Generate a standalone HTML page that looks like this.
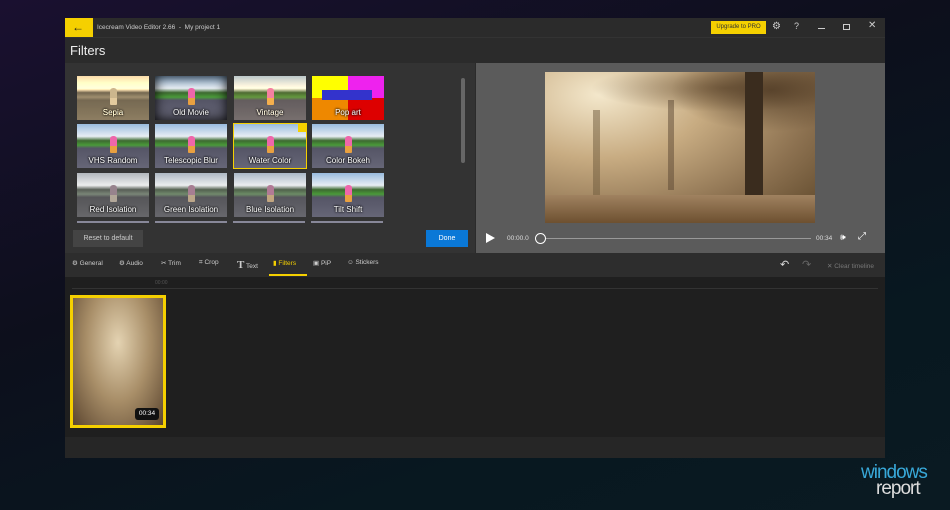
<!DOCTYPE html>
<html><head><style>
*{margin:0;padding:0;box-sizing:border-box}
body{width:950px;height:510px;overflow:hidden;position:relative;font-family:"Liberation Sans",sans-serif;background:linear-gradient(160deg,#1a1030 0%,#0d0f1c 40%,#081820 75%,#0a1a22 100%)}
.a{position:absolute}
.t{color:#ddd;font-size:7px}
.th{position:absolute;width:72px;height:44px;overflow:hidden;background:linear-gradient(#9bd 0%,#e8eef4 28%,#3d6a30 38%,#4a9a3a 48%,#556 55%,#667 100%)}
.th .l{position:absolute;bottom:3px;width:100%;text-align:center;color:#fff;font-size:8px;text-shadow:0 0 2px #000,0 0 2px #000}
.th .c{position:absolute;left:33px;top:12px;width:7px;height:17px;background:linear-gradient(#e6a 0 60%,#e9a040 60%);border-radius:3px 3px 1px 1px}
.tb{position:absolute;top:259px;color:#ccc;font-size:6.5px}
</style></head><body>
<div class="a" style="left:65px;top:18px;width:820px;height:440px;background:#2b2b2b"></div>
<div class="a" style="left:65px;top:18px;width:28px;height:19px;background:#f5d000"></div>
<div class="a" style="left:72px;top:20px;font-size:12px;color:#222">←</div>
<div class="a t" style="left:97px;top:24px;color:#ccc;font-size:6.5px">Icecream Video Editor 2.66 &nbsp;- &nbsp;My project 1</div>
<div class="a" style="left:711px;top:21px;width:55px;height:13px;background:#f5d000;color:#333;font-size:6px;line-height:13px;text-align:center">Upgrade to PRO</div>
<div class="a" style="left:772px;top:21px;color:#ccc;font-size:10px">⚙</div>
<div class="a" style="left:794px;top:21px;color:#ccc;font-size:9px">?</div>
<div class="a" style="left:818px;top:28px;width:7px;height:1px;background:#ccc"></div>
<div class="a" style="left:843px;top:24px;width:7px;height:6px;border:1px solid #ccc"></div>
<div class="a" style="left:868px;top:20px;color:#ccc;font-size:10px">✕</div>
<div class="a" style="left:65px;top:37px;width:820px;height:1px;background:#333"></div>
<div class="a" style="left:70px;top:43px;color:#eee;font-size:13px">Filters</div>
<div class="a" style="left:65px;top:63px;width:410px;height:190px;background:#333"></div>
<div class="a" style="left:461px;top:78px;width:4px;height:85px;background:#666;border-radius:2px"></div>
<div class="th" style="left:77px;top:76px;filter:sepia(1)"><div class="c"></div><div class="l">Sepia</div></div>
<div class="th" style="left:155px;top:76px;box-shadow:inset 0 0 12px #000"><div class="c"></div><div class="l">Old Movie</div></div>
<div class="th" style="left:234px;top:76px;filter:sepia(.4) saturate(1.3)"><div class="c"></div><div class="l">Vintage</div></div>
<div class="th" style="left:312px;top:76px;background:linear-gradient(90deg,#ff0 0 50%,#e2e 50%)"><div class="a" style="left:0;top:22px;width:36px;height:22px;background:#e80"></div><div class="a" style="left:36px;top:22px;width:36px;height:22px;background:#d00"></div><div class="a" style="left:10px;top:14px;width:50px;height:10px;background:#33c"></div><div class="l">Pop art</div></div>
<div class="th" style="left:77px;top:124px"><div class="c"></div><div class="l">VHS Random</div></div>
<div class="th" style="left:155px;top:124px"><div class="c"></div><div class="l">Telescopic Blur</div></div>
<div class="th" style="left:234px;top:124px;outline:1px solid #f5d000"><div class="c"></div><div class="a" style="right:0;top:0;width:8px;height:8px;background:#f5d000"></div><div class="l">Water Color</div></div>
<div class="th" style="left:312px;top:124px"><div class="c"></div><div class="l">Color Bokeh</div></div>
<div class="th" style="left:77px;top:173px;filter:grayscale(.85)"><div class="c"></div><div class="l">Red Isolation</div></div>
<div class="th" style="left:155px;top:173px;filter:grayscale(.7)"><div class="c"></div><div class="l">Green Isolation</div></div>
<div class="th" style="left:234px;top:173px;filter:grayscale(.6)"><div class="c"></div><div class="l">Blue Isolation</div></div>
<div class="th" style="left:312px;top:173px"><div class="c"></div><div class="l">Tilt Shift</div></div>
<div class="a" style="left:77px;top:221px;width:308px;height:2px;background:repeating-linear-gradient(90deg,#889 0 72px,transparent 72px 78px)"></div>
<div class="a" style="left:73px;top:230px;width:70px;height:17px;background:#444;color:#ccc;font-size:7px;line-height:17px;text-align:center">Reset to default</div>
<div class="a" style="left:426px;top:230px;width:42px;height:17px;background:#0a78d7;color:#fff;font-size:7px;line-height:17px;text-align:center">Done</div>
<div class="a" style="left:476px;top:63px;width:409px;height:190px;background:#5b5b5b"></div>
<div class="a" style="left:545px;top:72px;width:270px;height:151px;background:radial-gradient(ellipse at 20% 15%,#f4e8cc 0%,#c8ac82 35%,#8c7150 70%,#5b4528 100%)"></div>
<div class="a" style="left:590px;top:72px;width:225px;height:40px;background:radial-gradient(ellipse at 60% 40%,rgba(90,66,40,.6),transparent 70%)"></div>
<div class="a" style="left:670px;top:72px;width:145px;height:60px;background:radial-gradient(ellipse at 70% 30%,rgba(70,50,30,.7),transparent 70%)"></div>
<div class="a" style="left:745px;top:72px;width:18px;height:126px;background:#3a2c1e"></div>
<div class="a" style="left:668px;top:100px;width:6px;height:90px;background:rgba(90,70,50,.5)"></div>
<div class="a" style="left:593px;top:110px;width:7px;height:85px;background:rgba(110,90,60,.5)"></div>
<div class="a" style="left:545px;top:195px;width:270px;height:28px;background:linear-gradient(#a08260,#6d5030)"></div>
<div class="a" style="left:486px;top:233px;width:0;height:0;border-left:9px solid #fff;border-top:5px solid transparent;border-bottom:5px solid transparent"></div>
<div class="a" style="left:507px;top:235px;color:#ddd;font-size:6.5px">00:00.0</div>
<div class="a" style="left:541px;top:238px;width:270px;height:1px;background:#999"></div>
<div class="a" style="left:535px;top:233px;width:11px;height:11px;border:1.5px solid #fff;border-radius:50%;background:#5b5b5b"></div>
<div class="a" style="left:816px;top:235px;color:#ddd;font-size:6.5px">00:34</div>
<div class="a" style="left:840px;top:232px;color:#fff;font-size:9px">🕪</div>
<div class="a" style="left:858px;top:231px;color:#fff;font-size:10px">⤢</div>
<div class="a" style="left:65px;top:253px;width:820px;height:24px;background:#2d2d2d"></div>
<div class="tb" style="left:72px">⚙ General</div>
<div class="tb" style="left:119px">⚙ Audio</div>
<div class="tb" style="left:161px">✂ Trim</div>
<div class="tb" style="left:199px">⌗ Crop</div>
<div class="tb" style="left:237px"><b style="font-size:11px;font-family:'Liberation Serif'">T</b> Text</div>
<div class="tb" style="left:273px;color:#f5d000">▮ Filters</div>
<div class="a" style="left:269px;top:274px;width:38px;height:2px;background:#f5d000"></div>
<div class="tb" style="left:313px">▣ PiP</div>
<div class="tb" style="left:347px">☺ Stickers</div>
<div class="a" style="left:780px;top:258px;color:#ddd;font-size:11px">↶</div>
<div class="a" style="left:802px;top:258px;color:#666;font-size:11px">↷</div>
<div class="a" style="left:827px;top:262px;color:#777;font-size:6.5px">✕ Clear timeline</div>
<div class="a" style="left:65px;top:277px;width:820px;height:160px;background:#1f1f1f"></div>
<div class="a" style="left:72px;top:288px;width:806px;height:1px;background:#333"></div>
<div class="a" style="left:155px;top:280px;color:#555;font-size:5px">00:00</div>
<div class="a" style="left:70px;top:295px;width:96px;height:133px;border:3px solid #f5d000;background:radial-gradient(ellipse at 50% 35%,#e4d3b2 0%,#a88e68 50%,#5c4630 100%)"></div>
<div class="a" style="left:135px;top:408px;width:24px;height:12px;background:#111;border-radius:3px;color:#fff;font-size:6.5px;line-height:12px;text-align:center">00:34</div>
<div class="a" style="left:65px;top:437px;width:820px;height:21px;background:#262626"></div>
<div class="a" style="left:861px;top:462px;color:#38a8d8;font-size:19px;letter-spacing:-1px">windows</div>
<div class="a" style="left:876px;top:478px;color:#ddd;font-size:19px;letter-spacing:-1px">report</div>
</body></html>
